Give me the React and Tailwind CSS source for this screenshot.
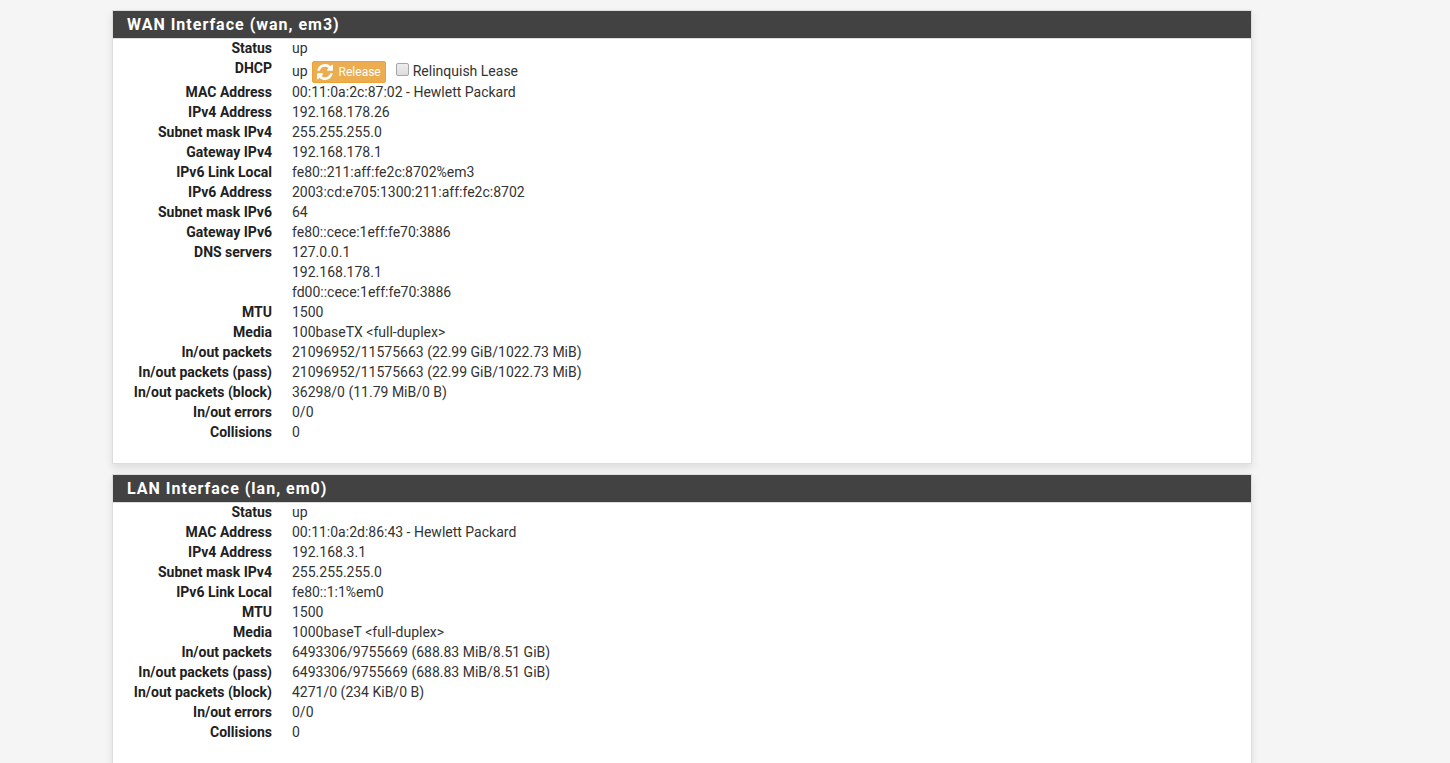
import React, { useState } from 'react';

const wanBefore = [
  ['Status', 'up'],
];

const wanRows = [
  ['MAC Address', '00:11:0a:2c:87:02 - Hewlett Packard'],
  ['IPv4 Address', '192.168.178.26'],
  ['Subnet mask IPv4', '255.255.255.0'],
  ['Gateway IPv4', '192.168.178.1'],
  ['IPv6 Link Local', 'fe80::211:aff:fe2c:8702%em3'],
  ['IPv6 Address', '2003:cd:e705:1300:211:aff:fe2c:8702'],
  ['Subnet mask IPv6', '64'],
  ['Gateway IPv6', 'fe80::cece:1eff:fe70:3886'],
  ['DNS servers', '127.0.0.1', '192.168.178.1', 'fd00::cece:1eff:fe70:3886'],
  ['MTU', '1500'],
  ['Media', '100baseTX <full-duplex>'],
  ['In/out packets', '21096952/11575663 (22.99 GiB/1022.73 MiB)'],
  ['In/out packets (pass)', '21096952/11575663 (22.99 GiB/1022.73 MiB)'],
  ['In/out packets (block)', '36298/0 (11.79 MiB/0 B)'],
  ['In/out errors', '0/0'],
  ['Collisions', '0'],
];

const lanRows = [
  ['Status', 'up'],
  ['MAC Address', '00:11:0a:2d:86:43 - Hewlett Packard'],
  ['IPv4 Address', '192.168.3.1'],
  ['Subnet mask IPv4', '255.255.255.0'],
  ['IPv6 Link Local', 'fe80::1:1%em0'],
  ['MTU', '1500'],
  ['Media', '1000baseT <full-duplex>'],
  ['In/out packets', '6493306/9755669 (688.83 MiB/8.51 GiB)'],
  ['In/out packets (pass)', '6493306/9755669 (688.83 MiB/8.51 GiB)'],
  ['In/out packets (block)', '4271/0 (234 KiB/0 B)'],
  ['In/out errors', '0/0'],
  ['Collisions', '0'],
];

function RefreshIcon() {
  return (
    <svg className="h-4 w-4" viewBox="0 0 1536 1536" fill="currentColor" aria-hidden="true">
      <path d="M1511 928q0 5-1 7-64 268-268 434.500T764 1536q-146 0-282.500-55T238 1324l-129 129q-19 19-45 19t-45-19-19-45V960q0-26 19-45t45-19h448q26 0 45 19t19 45-19 45l-137 137q71 66 161 102t187 36q134 0 250-65t186-179q11-17 53-117 8-23 30-23h192q13 0 22.500 9.500T1511 928zm25-800v448q0 26-19 45t-45 19h-448q-26 0-45-19t-19-45 19-45l138-138Q969 256 768 256q-134 0-250 65T332 500q-11 17-53 117-8 23-30 23H50q-13 0-22.500-9.500T18 608v-7q65-268 270-434.500T768 0q146 0 284 55.500T1297 212l130-129q19-19 45-19t45 19 19 45z" />
    </svg>
  );
}

function Row({ label, children }) {
  return (
    <div className="flex gap-5">
      <dt className="w-[159px] shrink-0 text-right font-bold whitespace-nowrap">{label}</dt>
      <dd className="min-w-0 flex-1 text-[#333333]">{children}</dd>
    </div>
  );
}

function Rows({ items }) {
  return items.map(([label, ...values]) => (
    <Row key={label} label={label}>
      {values.map((value) => (
        <div key={value}>{value}</div>
      ))}
    </Row>
  ));
}

function Panel({ title, children }) {
  return (
    <section className="border border-[#dddddd] bg-white shadow-[0_4px_8px_rgba(0,0,0,0.1)]">
      <h2 className="border-b border-[#dddddd] bg-[#424242] px-3.5 py-1 text-base leading-[19px] font-bold tracking-[1px] text-white">
        {title}
      </h2>
      <dl className="-mt-px pb-[21px]">{children}</dl>
    </section>
  );
}

export default function App() {
  const [relinquish, setRelinquish] = useState(false);

  return (
    <div className="min-h-screen bg-[#f5f5f5] font-['Roboto',sans-serif] text-sm text-[#212121]">
      <main className="ml-28 flex max-w-[1140px] flex-col gap-2.5 py-2.5">
        <Panel title="WAN Interface (wan, em3)">
          <Rows items={wanBefore} />
          <Row label="DHCP">
            <div className="flex h-6 items-center pt-1">
              <span className="pb-0.5">up</span>
              <button
                type="button"
                className="ml-1 flex h-[22px] items-center gap-1.5 rounded-xs border border-[#eea236] bg-[#ebad50] px-1 text-xs text-white"
              >
                <RefreshIcon />
                Release
              </button>
              <input
                id="relinquish"
                type="checkbox"
                checked={relinquish}
                onChange={(e) => setRelinquish(e.target.checked)}
                className="mr-1 mb-1.5 ml-2.5 h-[13px] w-[13px] appearance-none rounded-xs border border-[#a6a6a6] bg-linear-to-b from-[#eeeeee] to-[#dddddd] checked:bg-[#777777]"
              />
              <label htmlFor="relinquish" className="pb-0.5">Relinquish Lease</label>
            </div>
          </Row>
          <Rows items={wanRows} />
        </Panel>
        <Panel title="LAN Interface (lan, em0)">
          <Rows items={lanRows} />
        </Panel>
      </main>
    </div>
  );
}
